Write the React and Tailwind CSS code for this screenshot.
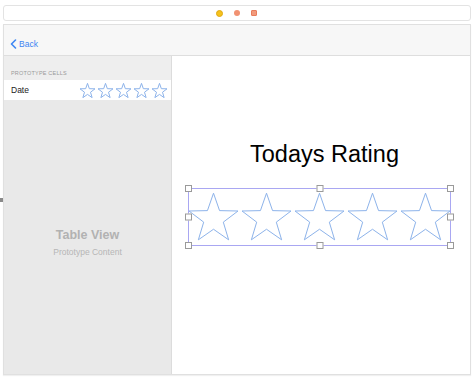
import React from "react";

const starPoints = (size, inner = 0.4) => {
  const cx = size / 2;
  const R = size / 2 / Math.sin((72 * Math.PI) / 180);
  const cy = R + (size - R * (1 + Math.cos((36 * Math.PI) / 180))) / 2;
  const pts = [];
  for (let i = 0; i < 10; i++) {
    const r = i % 2 === 0 ? R : R * inner;
    const a = (-90 + i * 36) * (Math.PI / 180);
    pts.push(`${(cx + r * Math.cos(a)).toFixed(2)},${(cy + r * Math.sin(a)).toFixed(2)}`);
  }
  return pts.join(" ");
};

const Star = ({ size, color = "#8db3ea", stroke = 1 }) => (
  <svg width={size} height={size} viewBox={`0 0 ${size} ${size}`} className="shrink-0">
    <polygon
      points={starPoints(size)}
      fill="none"
      stroke={color}
      strokeWidth={stroke}
      strokeLinejoin="round"
    />
  </svg>
);

const Handle = ({ className }) => (
  <div
    className={`absolute w-[7px] h-[7px] bg-white border border-[#9a9a9a] ${className}`}
  />
);

const App = () => {
  return (
    <div className="relative w-[474px] h-[380px] bg-white overflow-hidden font-['Liberation_Sans',Arial,sans-serif]">
      {/* scene dock */}
      <div className="mx-[3px] mt-[5px] h-[16px] rounded-[3px] border border-[#e3e3e3] bg-white flex items-center justify-center gap-[11px] pr-[1px]">
        <div className="w-[7px] h-[7px] rounded-full bg-[#f6c21c] border border-[#e0a810]" />
        <div className="w-[6px] h-[6px] rounded-full bg-[#f19272]" />
        <div className="w-[6px] h-[6px] rounded-[1px] bg-[#f29a7c] border border-[#e77d5c]" />
      </div>

      {/* segue stub */}
      <div className="absolute left-0 top-[198px] w-[3px] h-[4px] bg-[#8a8a8a]" />

      {/* view controller frame */}
      <div className="mx-[3px] mt-[3px] h-[351px] border border-[#e0e0e0] shadow-[0_1px_1px_rgba(0,0,0,0.06)] flex flex-col">
        <div className="h-[31px] bg-[#f7f7f7] border-b border-[#dedede] flex items-end pb-[6px] pl-[6px]">
          <div className="flex items-center gap-[2px] text-[#3d85f2]">
            <svg width="7" height="10" viewBox="0 0 7 10">
              <path d="M5.5 1 L1.5 5 L5.5 9" fill="none" stroke="#3d85f2" strokeWidth="1.6" strokeLinecap="round" strokeLinejoin="round" />
            </svg>
            <span className="text-[8.5px] leading-none">Back</span>
          </div>
        </div>

        <div className="flex flex-1">
          {/* table view */}
          <div className="w-[168px] bg-[#e9e9e9] flex flex-col border-r border-[#dcdcdc]">
            <div className="h-[24px] flex items-end pb-[4px] pl-[7px] bg-[#eeeeee]">
              <span className="text-[5.5px] leading-none tracking-[0.2px] text-[#9a9a9a]">PROTOTYPE CELLS</span>
            </div>
            <div className="h-[20px] bg-white flex items-center justify-between pl-[7px] pr-[4px]">
              <span className="text-[8.5px] leading-none text-[#222]">Date</span>
              <div className="flex items-center gap-[3px]">
                {[0, 1, 2, 3, 4].map((i) => (
                  <Star key={i} size={15} />
                ))}
              </div>
            </div>
            <div className="flex flex-col items-center pt-[129px]">
              <span className="text-[12.5px] font-bold leading-none text-[#b2b2b2]">Table View</span>
              <span className="mt-[6px] text-[8.5px] leading-none text-[#b6b6b6]">Prototype Content</span>
            </div>
          </div>

          {/* content */}
          <div className="flex-1 bg-white flex flex-col items-center">
            <h1 className="mt-[87px] pl-[7px] text-[23.5px] leading-none text-black">Todays Rating</h1>
            <div className="relative mt-[21px] -ml-[3px] w-[263px] h-[58px] border border-[#a9a7f2] flex items-center justify-between">
              {[0, 1, 2, 3, 4].map((i) => (
                <Star key={i} size={49} />
              ))}
              <Handle className="-left-[4px] -top-[4px]" />
              <Handle className="left-1/2 -translate-x-1/2 -top-[4px]" />
              <Handle className="-right-[4px] -top-[4px]" />
              <Handle className="-left-[4px] top-1/2 -translate-y-1/2" />
              <Handle className="-right-[4px] top-1/2 -translate-y-1/2" />
              <Handle className="-left-[4px] -bottom-[4px]" />
              <Handle className="left-1/2 -translate-x-1/2 -bottom-[4px]" />
              <Handle className="-right-[4px] -bottom-[4px]" />
            </div>
          </div>
        </div>
      </div>
    </div>
  );
};

export default App;
